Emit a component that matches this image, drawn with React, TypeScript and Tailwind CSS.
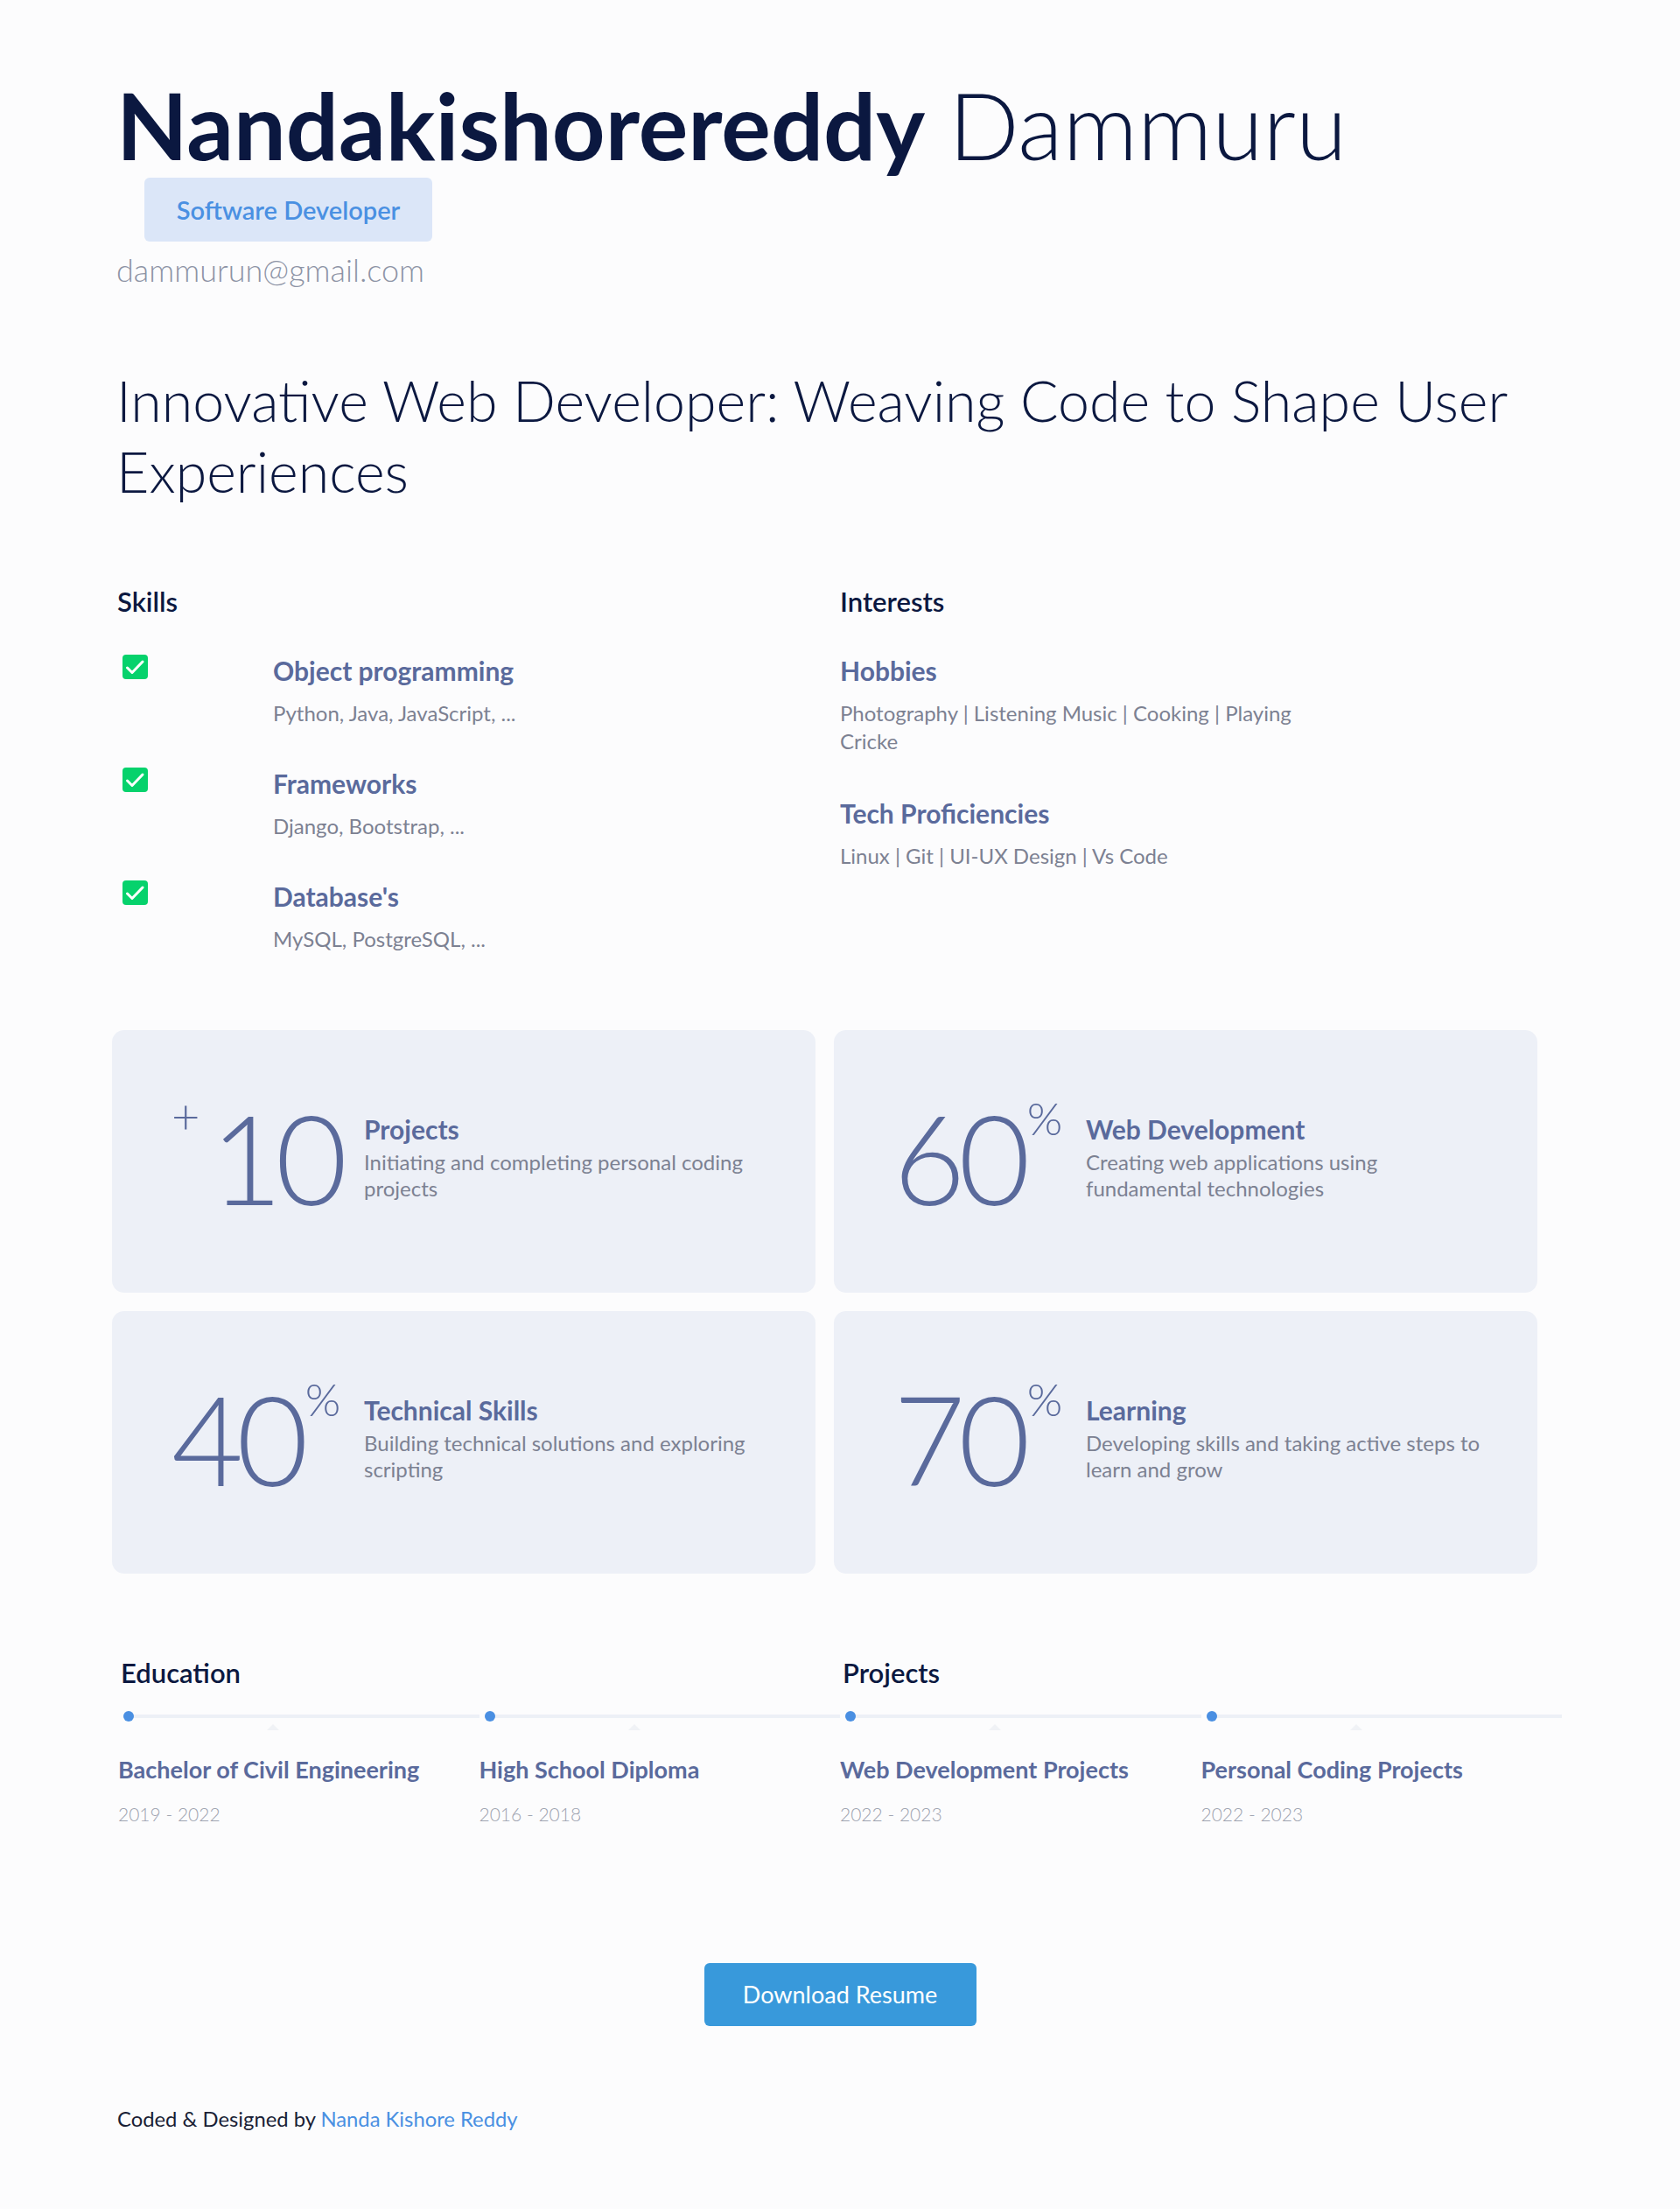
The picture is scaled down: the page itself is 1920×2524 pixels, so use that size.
import React from "react";

const skills = [
  { title: "Object programming", desc: "Python, Java, JavaScript, ..." },
  { title: "Frameworks", desc: "Django, Bootstrap, ..." },
  { title: "Database's", desc: "MySQL, PostgreSQL, ..." },
];

const stats = [
  { value: "10", prefix: "+", suffix: "", title: "Projects", desc: "Initiating and completing personal coding projects" },
  { value: "60", prefix: "", suffix: "%", title: "Web Development", desc: "Creating web applications using fundamental technologies" },
  { value: "40", prefix: "", suffix: "%", title: "Technical Skills", desc: "Building technical solutions and exploring scripting" },
  { value: "70", prefix: "", suffix: "%", title: "Learning", desc: "Developing skills and taking active steps to learn and grow" },
];

const timelines = [
  {
    heading: "Education",
    items: [
      { title: "Bachelor of Civil Engineering", date: "2019 - 2022" },
      { title: "High School Diploma", date: "2016 - 2018" },
    ],
  },
  {
    heading: "Projects",
    items: [
      { title: "Web Development Projects", date: "2022 - 2023" },
      { title: "Personal Coding Projects", date: "2022 - 2023" },
    ],
  },
];

const CheckBox = () => (
  <div className="w-[29px] h-[28px] rounded-[4px] bg-[#06d26c] flex items-center justify-center">
    <svg width="29" height="28" viewBox="0 0 29 28" fill="none">
      <path d="M5.5 15 L11 20.5 L23 8" stroke="#ffffff" strokeWidth="3" strokeLinecap="round" strokeLinejoin="round" />
    </svg>
  </div>
);

export default function App() {
  return (
    <div className="min-h-screen bg-[#fcfcfd] font-['Lato',sans-serif]">
      <div className="px-[128px] pt-[89px] pb-[88px]">
        {/* Header */}
        <div className="pl-[5px]">
          <h1 className="text-[106px] leading-[106px] text-[#0b1840] whitespace-nowrap">
            <span className="font-bold">Nandakishorereddy</span>{" "}
            <span className="font-light">Dammuru</span>
          </h1>
          <div className="mt-[8px] ml-[32px] w-[329px] h-[73px] rounded-[6px] bg-[#dbe6f8] flex items-center justify-center text-[29px] font-semibold text-[#4a90e2]">
            Software Developer
          </div>
          <p className="mt-[11px] text-[36px] leading-[42px] font-light text-[#8d93a5]">
            dammurun@gmail.com
          </p>
          <h2 className="mt-[88px] text-[64.5px] leading-[81px] font-light text-[#0b1840] max-w-[1620px]">
            Innovative Web Developer: Weaving Code to Shape User Experiences
          </h2>
        </div>

        {/* Skills & Interests */}
        <div className="mt-[90px] pl-[6px] grid grid-cols-[826px_1fr]">
          <div>
            <h3 className="text-[31px] leading-[37px] font-semibold text-[#0b1840]">Skills</h3>
            <div className="mt-[42px] flex flex-col gap-[46px]">
              {skills.map((s) => (
                <div key={s.title} className="flex">
                  <div className="w-[178px] pl-[6px]">
                    <CheckBox />
                  </div>
                  <div>
                    <div className="text-[30px] leading-[36px] font-bold text-[#5a6a9c]">{s.title}</div>
                    <div className="mt-[15px] text-[24px] leading-[32px] text-[#7c8192]">{s.desc}</div>
                  </div>
                </div>
              ))}
            </div>
          </div>
          <div>
            <h3 className="text-[31px] leading-[37px] font-semibold text-[#0b1840]">Interests</h3>
            <div className="mt-[42px]">
              <div className="text-[30px] leading-[36px] font-bold text-[#5a6a9c]">Hobbies</div>
              <div className="mt-[15px] w-[560px] text-[24px] leading-[32px] text-[#7c8192]">
                Photography | Listening Music | Cooking | Playing Cricke
              </div>
              <div className="mt-[48px] text-[30px] leading-[36px] font-bold text-[#5a6a9c]">Tech Proficiencies</div>
              <div className="mt-[15px] text-[24px] leading-[32px] text-[#7c8192]">
                Linux | Git | UI-UX Design | Vs Code
              </div>
            </div>
          </div>
        </div>

        {/* Stats */}
        <div className="mt-[88px] grid grid-cols-[804px_804px] gap-[21px]">
          {stats.map((s) => (
            <div key={s.title} className="h-[300px] rounded-[14px] bg-[#edf0f7] flex items-center pl-[68px] pb-[10px]">
              <div className="w-[220px] flex items-start text-[#5a6a9c] font-light">
                {s.prefix && <span className="text-[56px] leading-[48px] mr-[12px]">{s.prefix}</span>}
                <span className="text-[142px] leading-[142px] tracking-[-8px]">{s.value}</span>
                {s.suffix && <span className="text-[52px] leading-[52px] ml-[4px]">{s.suffix}</span>}
              </div>
              <div className="w-[458px]">
                <div className="text-[30px] leading-[36px] font-bold text-[#5a6a9c]">{s.title}</div>
                <div className="mt-[5px] text-[24px] leading-[30px] text-[#7c8192]">{s.desc}</div>
              </div>
            </div>
          ))}
        </div>

        {/* Timelines */}
        <div className="mt-[95px] pl-[7px] grid grid-cols-[825px_825px]">
          {timelines.map((t) => (
            <div key={t.heading}>
              <h3 className="pl-[3px] text-[31px] leading-[37px] font-semibold text-[#0b1840]">{t.heading}</h3>
              <div className="mt-[25px] grid grid-cols-2">
                {t.items.map((it) => (
                  <div key={it.title}>
                    <div className="relative h-[12px] ml-[6px]">
                      <div className="absolute left-0 right-0 top-[4px] h-[4px] bg-[#edf0f6]" />
                      <div className="absolute left-0 top-0 w-[12px] h-[12px] rounded-full bg-[#4a8fe2]" />
                      <div className="absolute left-[164px] top-[15px] w-0 h-0 border-l-[7px] border-r-[7px] border-b-[7px] border-l-transparent border-r-transparent border-b-[#f0f2f6]" />
                    </div>
                    <div className="mt-[38px] text-[27px] leading-[34px] font-bold text-[#5a6a9c]">{it.title}</div>
                    <div className="mt-[20px] text-[21px] leading-[28px] font-light text-[#9ea3b0]">{it.date}</div>
                  </div>
                ))}
              </div>
            </div>
          ))}
        </div>

        {/* Download */}
        <div className="mt-[156px] flex justify-center">
          <button className="w-[311px] h-[72px] rounded-[6px] bg-[#3899db] text-white text-[27px]">
            Download Resume
          </button>
        </div>

        {/* Footer */}
        <p className="mt-[91px] pl-[6px] text-[23.8px] leading-[30px] text-[#1a1f36]">
          Coded &amp; Designed by <span className="text-[#4a90e2]">Nanda Kishore Reddy</span>
        </p>
      </div>
    </div>
  );
}
